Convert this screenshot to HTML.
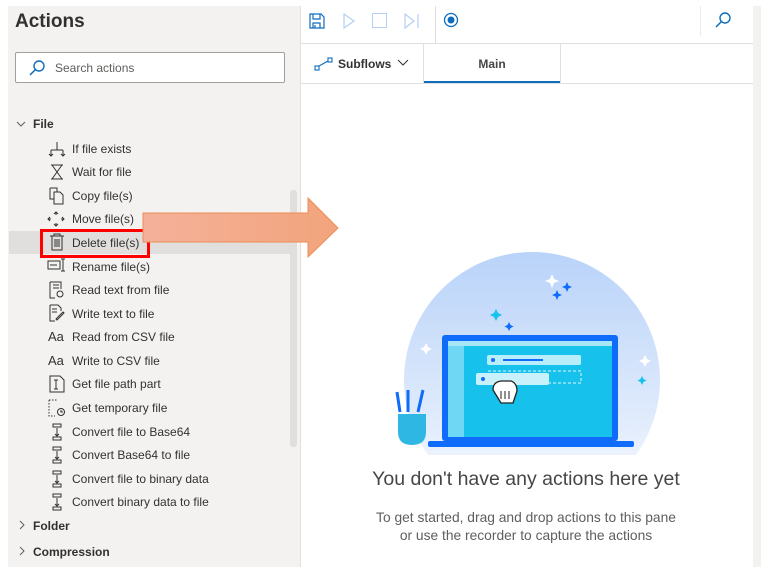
<!DOCTYPE html>
<html><head><meta charset="utf-8"><style>
*{margin:0;padding:0;box-sizing:border-box}
body{width:768px;height:567px;background:#fff;position:relative;overflow:hidden;font-family:"Liberation Sans",sans-serif;color:#323130}
.abs{position:absolute}
#left{left:8px;top:6px;width:292px;height:561px;background:#f3f2f1}
.item{position:absolute;left:72px;font-size:12px;color:#323130;white-space:nowrap}
</style></head><body>
<div id="left" class="abs"></div>
<div class="abs" style="left:15px;top:11px;font-size:19px;font-weight:bold;color:#323130">Actions</div>
<div class="abs" style="left:15px;top:52px;width:270px;height:31px;background:#fff;border:1px solid #a19f9d;border-radius:2px"></div>
<svg class="abs" style="left:28px;top:59px" width="18" height="18" viewBox="0 0 18 18"><circle cx="11" cy="7" r="5" fill="none" stroke="#0f6cbd" stroke-width="1.4"/><path d="M7.5 10.5L2 16" stroke="#0f6cbd" stroke-width="1.5"/></svg>
<div class="abs" style="left:55px;top:61px;font-size:12px;color:#605e5c">Search actions</div>
<svg class="abs" style="left:16px;top:120px" width="10" height="8"><path d="M1 2l4 4 4-4" fill="none" stroke="#605e5c"/></svg>
<div class="abs" style="left:33px;top:117px;font-size:12px;font-weight:bold">File</div>
<div class="abs" style="left:9px;top:231px;width:281px;height:23px;background:#e1dfdd"></div>
<div class="abs" style="left:290px;top:190px;width:7px;height:257px;background:#e1dfdd;border-radius:3px"></div>
<svg class="abs" style="left:48px;top:141px" width="18" height="18" viewBox="0 0 18 18" fill="none" stroke="#323130"><path d="M9 1v8M3 9h12M3 9v6M15 9v6M1 13l2 2 2-2M13 13l2 2 2-2"/></svg>
<svg class="abs" style="left:49px;top:164px" width="16" height="16" viewBox="0 0 16 16" fill="none" stroke="#323130"><path d="M2 1h12M2 15h12M3 1l10 14M13 1L3 15"/></svg>
<svg class="abs" style="left:49px;top:187px" width="16" height="18" viewBox="0 0 16 18" fill="none" stroke="#323130"><path d="M1 1h7v4M1 1v11h4M5 5h6l3 3v9H5z"/></svg>
<svg class="abs" style="left:47px;top:211px" width="18" height="16" viewBox="0 0 18 16" fill="none" stroke="#323130"><path d="M9 1v3M9 12v3M1 8h3M14 8h3M7 3l2-2 2 2M7 13l2 2 2-2M3 6l-2 2 2 2M15 6l2 2-2 2"/></svg>
<svg class="abs" style="left:49px;top:233px" width="16" height="18" viewBox="0 0 16 18" fill="none" stroke="#323130"><path d="M1 3h14M5 3V1h6v2M3 3v14h10V3M6 6v8M8 6v8M10 6v8"/></svg>
<svg class="abs" style="left:47px;top:258px" width="20" height="14" viewBox="0 0 20 14" fill="none" stroke="#323130"><path d="M1 3h12v8H1zM3 7h7M14 1h4M16 1v12M14 13h4"/></svg>
<svg class="abs" style="left:49px;top:281px" width="16" height="18" viewBox="0 0 16 18" fill="none" stroke="#323130"><path d="M1 1h11v7M1 1v16h5M4 4h6M4 7h6"/><circle cx="11" cy="13" r="3"/></svg>
<svg class="abs" style="left:49px;top:304px" width="16" height="18" viewBox="0 0 16 18" fill="none" stroke="#323130"><path d="M1 1h8l3 3v3M1 1v16h5M3 5h5M3 8h5M7 15l7-7 1 1-7 7z"/></svg>
<div class="abs" style="left:48px;top:329px;font-size:13px">Aa</div>
<div class="abs" style="left:48px;top:353px;font-size:13px">Aa</div>
<svg class="abs" style="left:49px;top:375px" width="16" height="18" viewBox="0 0 16 18" fill="none" stroke="#323130"><path d="M1 1h10l4 4v12H1zM5 5h4M7 5v9M5 14h4"/></svg>
<svg class="abs" style="left:48px;top:399px" width="18" height="18" viewBox="0 0 18 18" fill="none" stroke="#323130" stroke-dasharray="1.5 1.5"><path d="M1 1h9M1 1v16h6"/><circle cx="13" cy="13" r="3.5" stroke-dasharray="none"/><path d="M13 11v2h2" stroke-dasharray="none"/></svg>
<svg class="abs" style="left:52px;top:423px" width="10" height="18" viewBox="0 0 10 18" fill="none" stroke="#323130"><path d="M1 1h8v3H1zM1 14h8v3H1zM5 5v8M3 11l2 2 2-2"/></svg>
<svg class="abs" style="left:52px;top:446px" width="10" height="18" viewBox="0 0 10 18" fill="none" stroke="#323130"><path d="M1 1h8v3H1zM1 14h8v3H1zM5 5v8M3 11l2 2 2-2"/></svg>
<svg class="abs" style="left:52px;top:470px" width="10" height="18" viewBox="0 0 10 18" fill="none" stroke="#323130"><path d="M1 1h8v3H1zM1 14h8v3H1zM5 5v8M3 11l2 2 2-2"/></svg>
<svg class="abs" style="left:52px;top:493px" width="10" height="18" viewBox="0 0 10 18" fill="none" stroke="#323130"><path d="M1 1h8v3H1zM1 14h8v3H1zM5 5v8M3 11l2 2 2-2"/></svg>
<div class="item" style="top:142px">If file exists</div>
<div class="item" style="top:165px">Wait for file</div>
<div class="item" style="top:189px">Copy file(s)</div>
<div class="item" style="top:212px">Move file(s)</div>
<div class="item" style="top:236px">Delete file(s)</div>
<div class="item" style="top:260px">Rename file(s)</div>
<div class="item" style="top:283px">Read text from file</div>
<div class="item" style="top:307px">Write text to file</div>
<div class="item" style="top:330px">Read from CSV file</div>
<div class="item" style="top:354px">Write to CSV file</div>
<div class="item" style="top:377px">Get file path part</div>
<div class="item" style="top:401px">Get temporary file</div>
<div class="item" style="top:425px">Convert file to Base64</div>
<div class="item" style="top:448px">Convert Base64 to file</div>
<div class="item" style="top:472px">Convert file to binary data</div>
<div class="item" style="top:495px">Convert binary data to file</div>
<svg class="abs" style="left:18px;top:520px" width="8" height="10"><path d="M2 1l4 4-4 4" fill="none" stroke="#605e5c"/></svg>
<div class="abs" style="left:33px;top:519px;font-size:12px;font-weight:bold">Folder</div>
<svg class="abs" style="left:18px;top:546px" width="8" height="10"><path d="M2 1l4 4-4 4" fill="none" stroke="#605e5c"/></svg>
<div class="abs" style="left:33px;top:545px;font-size:12px;font-weight:bold">Compression</div>
<div class="abs" style="left:40px;top:229px;width:110px;height:29px;border:3px solid #ff0000"></div>
<div class="abs" style="left:300px;top:6px;width:1px;height:561px;background:#e1dfdd"></div>
<div class="abs" style="left:753px;top:6px;width:8px;height:561px;background:#f3f2f1"></div>
<div class="abs" style="left:301px;top:43px;width:452px;height:1px;background:#e1dfdd"></div>
<div class="abs" style="left:301px;top:83px;width:452px;height:1px;background:#e1dfdd"></div>
<div class="abs" style="left:435px;top:6px;width:1px;height:37px;background:#e1dfdd"></div>
<div class="abs" style="left:700px;top:6px;width:1px;height:30px;background:#edebe9"></div>
<svg class="abs" style="left:309px;top:13px" width="16" height="16" viewBox="0 0 16 16" fill="none" stroke="#0f6cbd" stroke-width="1.2"><path d="M1 1h11l3 3v11H1zM4 1v5h7V1M4 15v-5h7v5M6 12v3"/></svg>
<svg class="abs" style="left:343px;top:13px" width="12" height="16"><path d="M1 1l10 7-10 7z" fill="none" stroke="#b3cff5" stroke-width="1.2"/></svg>
<div class="abs" style="left:372px;top:13px;width:15px;height:15px;border:1.3px solid #b3cff5"></div>
<svg class="abs" style="left:404px;top:13px" width="16" height="16"><path d="M1 1l9 7-9 7zM14 1v14" fill="none" stroke="#b3cff5" stroke-width="1.2"/></svg>
<svg class="abs" style="left:443px;top:12px" width="16" height="16"><circle cx="8" cy="8" r="6.5" fill="none" stroke="#0f6cbd" stroke-width="1.3"/><circle cx="8" cy="8" r="3.5" fill="#0f6cbd"/></svg>
<svg class="abs" style="left:714px;top:11px" width="18" height="18"><circle cx="11" cy="7" r="5" fill="none" stroke="#0f6cbd" stroke-width="1.4"/><path d="M7.5 10.5L2 16" stroke="#0f6cbd" stroke-width="1.5"/></svg>
<svg class="abs" style="left:314px;top:56px" width="20" height="16" fill="none" stroke="#0f6cbd" stroke-width="1.1"><rect x="1" y="10" width="4" height="4"/><rect x="14" y="2" width="4" height="4"/><path d="M5 10l9-5"/></svg>
<div class="abs" style="left:338px;top:57px;font-size:12px;font-weight:bold;color:#323130">Subflows</div>
<svg class="abs" style="left:397px;top:59px" width="12" height="8"><path d="M1 1l5 5 5-5" fill="none" stroke="#323130"/></svg>
<div class="abs" style="left:423px;top:43px;width:1px;height:40px;background:#e1dfdd"></div>
<div class="abs" style="left:560px;top:43px;width:1px;height:40px;background:#e1dfdd"></div>
<div class="abs" style="left:424px;top:57px;width:136px;text-align:center;font-size:12px;font-weight:bold;color:#484644">Main</div>
<div class="abs" style="left:424px;top:81px;width:136px;height:2px;background:#0f6cbd"></div>
<svg class="abs" style="left:142px;top:196px" width="200" height="64"><defs><linearGradient id="ag" x1="0" x2="1"><stop offset="0" stop-color="#f4b19a"/><stop offset="1" stop-color="#f2a47c"/></linearGradient></defs><path d="M1 17H166V2L196 32 166 61V46H1z" fill="url(#ag)" stroke="#ed8d55" stroke-width="1"/></svg>
<svg class="abs" style="left:380px;top:245px" width="300" height="210" viewBox="0 0 300 210"><defs><linearGradient id="cg" x1="0" y1="0" x2="0" y2="1"><stop offset="0" stop-color="#b9d3f9"/><stop offset="0.7" stop-color="#e3edfc"/><stop offset="1" stop-color="#ffffff"/></linearGradient></defs>
<circle cx="152" cy="135" r="128" fill="url(#cg)"/>
<rect x="62" y="90" width="176" height="106" rx="3" fill="#0f6cfa"/>
<rect x="68" y="96" width="164" height="96" fill="#16c1ec"/>
<rect x="68" y="96" width="164" height="5" fill="#a6e6f7"/>
<rect x="68" y="101" width="16" height="91" fill="#6fd6f3"/>
<rect x="107" y="110" width="94" height="10" rx="2" fill="#b8eefb"/>
<rect x="123" y="114" width="40" height="2" fill="#0f6cfa"/>
<circle cx="113" cy="115" r="2" fill="#0f6cfa"/>
<rect x="108" y="126" width="93" height="12" fill="none" stroke="#e0f7fd" stroke-dasharray="3 2"/>
<rect x="96" y="128" width="73" height="12" rx="2" fill="#c8f1fc"/>
<circle cx="103" cy="134" r="2" fill="#0f6cfa"/>
<path d="M113 145q0-8 8-9h10q6 2 6 10l-4 12h-12z" fill="#fff" stroke="#222" stroke-width="1.3"/>
<path d="M121 146v8M125 146v8M129 146v8" stroke="#222" stroke-width="1"/>
<rect x="48" y="196" width="206" height="6" rx="2" fill="#0f6cfa"/>
<path d="M18 169h28v18q0 13-14 13t-14-13z" fill="#2fb7e3"/>
<path d="M20 167l-3-20M28 167l0-22M38 167l5-22" stroke="#0f6cfa" stroke-width="3"/>
<path d="M172 29l2 5 5 2-5 2-2 5-2-5-5-2 5-2z" fill="#fff"/>
<path d="M187 37l1.5 3.5 3.5 1.5-3.5 1.5-1.5 3.5-1.5-3.5-3.5-1.5 3.5-1.5z" fill="#0f6cfa"/>
<path d="M177 45l1.5 3.5 3.5 1.5-3.5 1.5-1.5 3.5-1.5-3.5-3.5-1.5 3.5-1.5z" fill="#0f6cfa"/>
<path d="M116 64l2 4 4 2-4 2-2 4-2-4-4-2 4-2z" fill="#16c1ec"/>
<path d="M129 77l1.5 3 3 1.5-3 1.5-1.5 3-1.5-3-3-1.5 3-1.5z" fill="#0f6cfa"/>
<path d="M46 98l2 4 4 2-4 2-2 4-2-4-4-2 4-2z" fill="#fff"/>
<path d="M265 110l2 4 4 2-4 2-2 4-2-4-4-2 4-2z" fill="#fff"/>
<path d="M262 131l1.5 3 3 1.5-3 1.5-1.5 3-1.5-3-3-1.5 3-1.5z" fill="#16c1ec"/>
</svg>
<div class="abs" style="left:330px;top:468px;width:392px;text-align:center;font-size:19.5px;color:#484644">You don't have any actions here yet</div>
<div class="abs" style="left:330px;top:509px;width:392px;text-align:center;font-size:13.8px;line-height:18px;color:#605e5c">To get started, drag and drop actions to this pane<br>or use the recorder to capture the actions</div>
</body></html>
